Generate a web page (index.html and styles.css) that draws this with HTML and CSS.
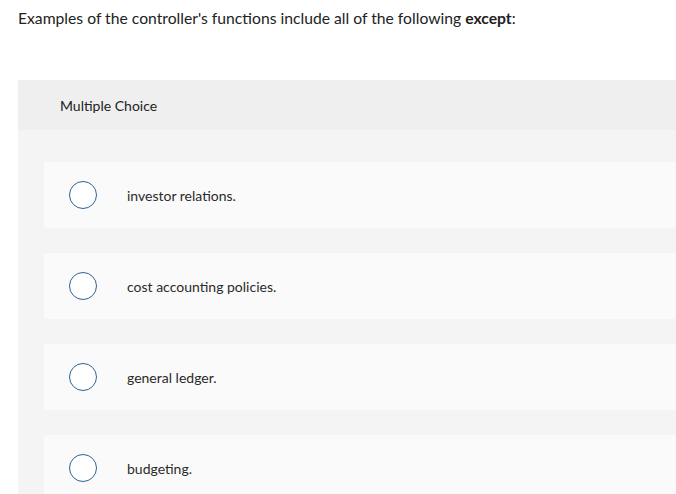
FILE: index.html
```html
<!DOCTYPE html>
<html>
<head>
<meta charset="utf-8">
<link rel="stylesheet" href="styles.css">
</head>
<body>
<p class="question">Examples of the controller's functions include all of the following <strong>except</strong>:</p>
<section class="panel">
  <div class="panel-header">Multiple Choice</div>
  <div class="options">
    <div class="option"><span class="radio"></span><span class="label">investor relations.</span></div>
    <div class="option"><span class="radio"></span><span class="label">cost accounting policies.</span></div>
    <div class="option"><span class="radio"></span><span class="label">general ledger.</span></div>
    <div class="option"><span class="radio"></span><span class="label">budgeting.</span></div>
  </div>
</section>
</body>
</html>
```
FILE: styles.css
```css
html, body {
  margin: 0;
  padding: 0;
  background: #ffffff;
  font-family: "Lato", "Open Sans", sans-serif;
  color: #222;
}
.question {
  margin: 0;
  padding: 8px 0 0 18px;
  height: 80px;
  box-sizing: border-box;
  font-size: 15.7px;
  line-height: 20px;
  color: #222;
}
.question strong {
  font-weight: 700;
}
.panel {
  margin-left: 18px;
  background: #f4f4f4;
}
.panel-header {
  height: 50px;
  display: flex;
  align-items: center;
  padding-left: 42px;
  background: #efefef;
  font-size: 14px;
  color: #222;
}
.options {
  padding: 32px 0 0 26px;
  display: flex;
  flex-direction: column;
  gap: 25px;
}
.option {
  height: 66px;
  display: flex;
  align-items: center;
  padding-left: 25px;
  background: #fafafa;
  border-radius: 3px 0 0 3px;
}
.radio {
  width: 28px;
  height: 28px;
  box-sizing: border-box;
  border: 1.5px solid #2d6294;
  border-radius: 50%;
  background: #fff;
  flex: none;
}
.label {
  margin-left: 30px;
  font-size: 14px;
  color: #2a2a2a;
}
```
